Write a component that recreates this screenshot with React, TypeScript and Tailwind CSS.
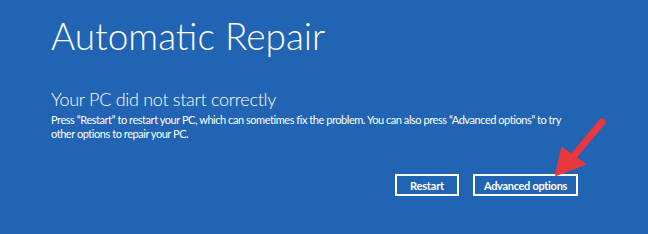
import React from 'react';

function Arrow() {
  return (
    <svg
      className="absolute left-[548px] top-[114px]"
      width="64"
      height="68"
      viewBox="0 0 64 68"
      fill="none"
    >
      {/* shaft */}
      <path d="M54 8 L24 44" stroke="#e8383d" strokeWidth="7" strokeLinecap="round" />
      {/* head */}
      <path d="M8 61 L14 34 L37 50 Z" fill="#e8383d" stroke="#e8383d" strokeWidth="2" strokeLinejoin="round" />
    </svg>
  );
}

export default function App() {
  return (
    <div className="relative w-[648px] h-[234px] bg-[#2064b3] overflow-hidden text-white font-['Lato',sans-serif]">
      <div className="flex flex-col pl-[51px] pr-[70px] pt-[14px]">
        <h1 className="text-[37px] font-light leading-[44px]">Automatic Repair</h1>

        <h2 className="mt-[30px] text-[18px] font-light leading-[22px] tracking-[-0.3px]">
          Your PC did not start correctly
        </h2>
        <p className="mt-[3px] text-[11px] leading-[14px] tracking-[-0.45px]">
          Press “Restart” to restart your PC, which can sometimes fix the problem. You can also press “Advanced options” to try
          other options to repair your PC.
        </p>

        <div className="mt-[33px] flex justify-end gap-[14px]">
          <button className="w-[64px] h-[22px] border-2 border-white text-[11px] font-bold leading-none tracking-[-0.2px] flex items-center justify-center whitespace-nowrap">
            Restart
          </button>
          <button className="w-[105px] h-[22px] border-2 border-white text-[11px] font-bold leading-none tracking-[-0.3px] flex items-center justify-center whitespace-nowrap">
            Advanced options
          </button>
        </div>
      </div>
      <Arrow />
    </div>
  );
}
